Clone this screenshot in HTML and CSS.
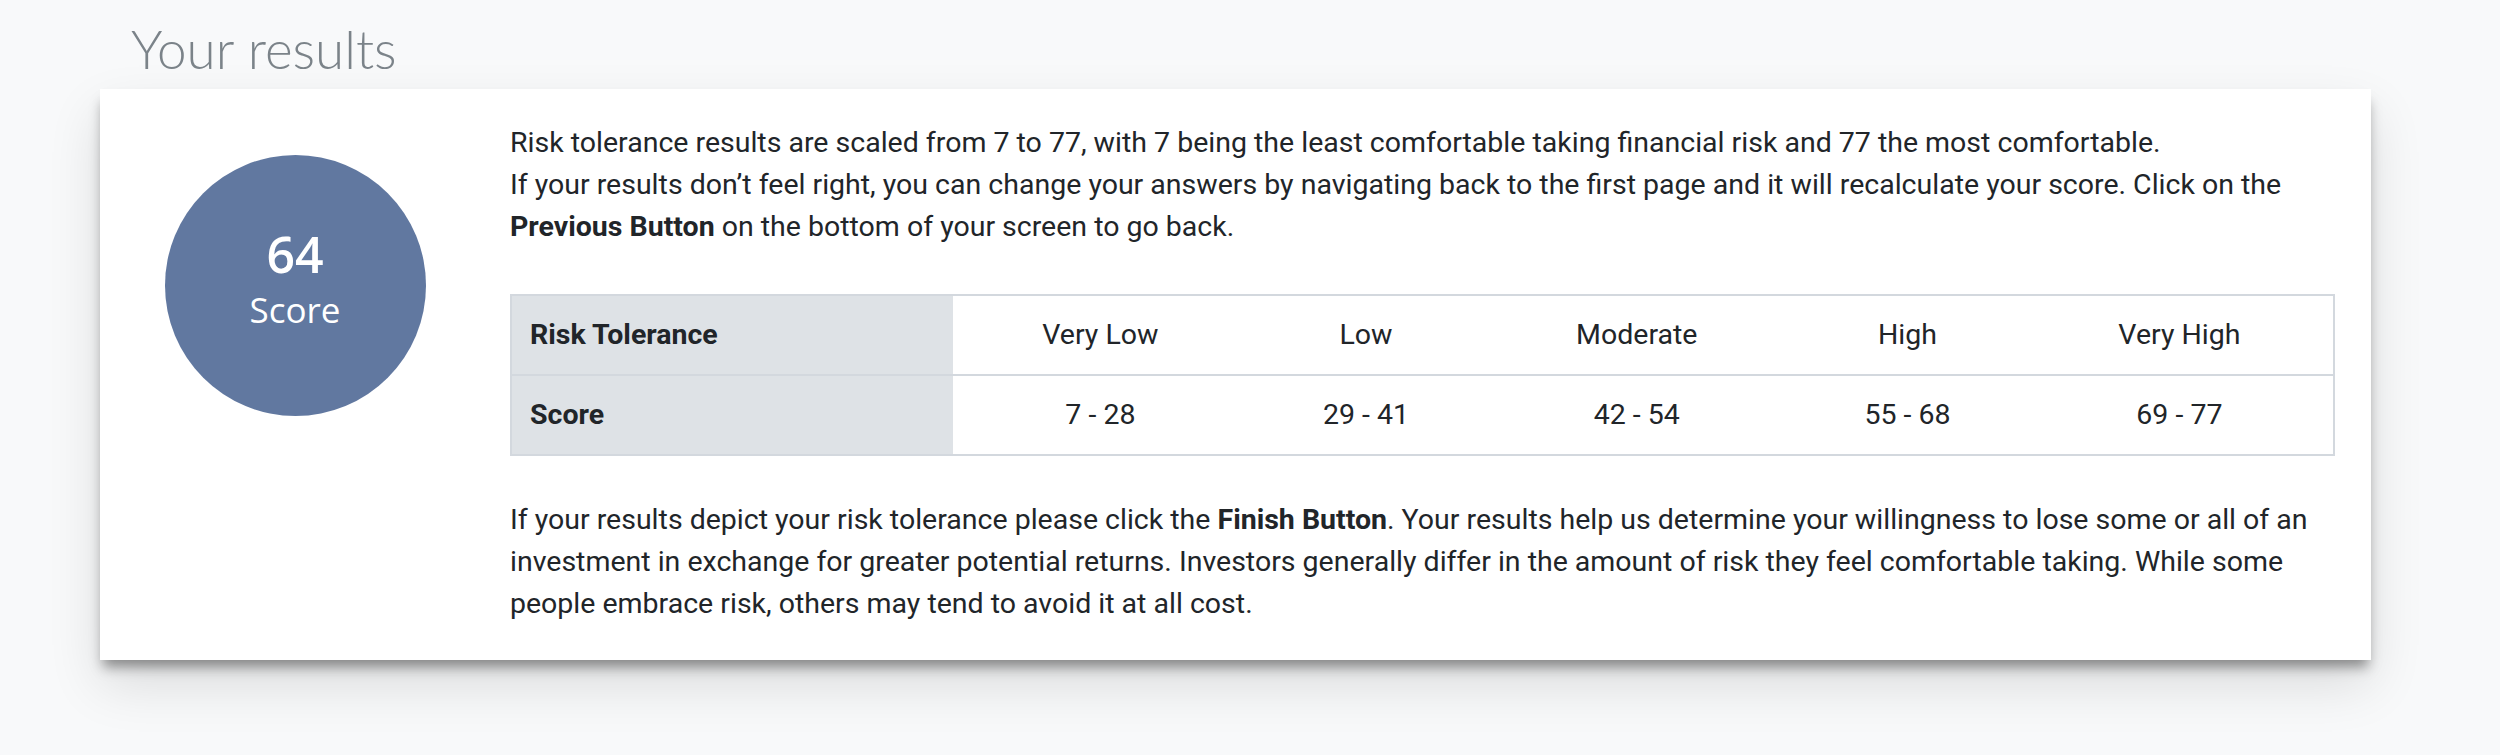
FILE: index.html
```html
<!DOCTYPE html>
<html>
<head>
<meta charset="utf-8">
<link rel="stylesheet" href="styles.css">
</head>
<body>
<div class="page">
  <h1 class="title">Your results</h1>
  <div class="card">
    <div class="score-col">
      <div class="circle">
        <div class="num">64</div>
        <div class="lbl">Score</div>
      </div>
    </div>
    <div class="content">
      <p class="para">Risk tolerance results are scaled from 7 to 77, with 7 being the least comfortable taking financial risk and 77 the most comfortable.<br>If your results don’t feel right, you can change your answers by navigating back to the first page and it will recalculate your score. Click on the <b>Previous Button</b> on the bottom of your screen to go back.</p>
      <table class="tbl">
        <tr>
          <th>Risk Tolerance</th>
          <td>Very Low</td><td>Low</td><td>Moderate</td><td>High</td><td>Very High</td>
        </tr>
        <tr>
          <th>Score</th>
          <td>7 - 28</td><td>29 - 41</td><td>42 - 54</td><td>55 - 68</td><td>69 - 77</td>
        </tr>
      </table>
      <p class="para last">If your results depict your risk tolerance please click the <b>Finish Button</b>. Your results help us determine your willingness to lose some or all of an investment in exchange for greater potential returns. Investors generally differ in the amount of risk they feel comfortable taking. While some people embrace risk, others may tend to avoid it at all cost.</p>
    </div>
  </div>
</div>
</body>
</html>
```
FILE: styles.css
```css
html, body {
  margin: 0;
  padding: 0;
  background: #f8f9fa;
}
.page {
  width: 2500px;
  height: 755px;
  overflow: hidden;
}
.title {
  margin: 0;
  padding: 19px 0 0 131px;
  height: 89px;
  box-sizing: border-box;
  font-family: Lato, "Liberation Sans", sans-serif;
  font-weight: 300;
  font-size: 53px;
  line-height: 60px;
  color: #7b8389;
}
.card {
  margin-left: 100px;
  width: 2271px;
  height: 571px;
  box-sizing: border-box;
  background: #fff;
  display: flex;
  padding: 33px 36px 0 0;
  box-shadow: 0 10px 12px -3px rgba(0,0,0,0.4), 0 24px 50px rgba(0,0,0,0.12);
}
.score-col {
  width: 390px;
  flex: none;
  display: flex;
  justify-content: center;
  align-items: flex-start;
  padding-top: 33px;
}
.circle {
  width: 261px;
  height: 261px;
  border-radius: 50%;
  background: #6178a0;
  color: #fff;
  font-family: "Open Sans", sans-serif;
  display: flex;
  flex-direction: column;
  align-items: center;
  justify-content: center;
}
.num {
  font-size: 50px;
  font-weight: 600;
  line-height: 62px;
  margin-top: -14px;
}
.lbl {
  font-size: 35px;
  line-height: 50px;
}
.content {
  flex: 1;
  margin-left: 20px;
  font-family: Roboto, "Liberation Sans", sans-serif;
  font-size: 28.5px;
  line-height: 42px;
  color: #212529;
}
.para {
  margin: 0;
}
.para b {
  font-weight: 700;
}
.tbl {
  margin: 46px 0 43px;
  width: 100%;
  border-collapse: collapse;
  border: 2px solid #d3d8de;
}
.tbl th, .tbl td {
  height: 78px;
  border-bottom: 2px solid #d3d8de;
  padding: 0 18px;
  vertical-align: middle;
  font-size: 28.5px;
}
.tbl th {
  width: 405px;
  background: #dee2e6;
  text-align: left;
  font-weight: 700;
}
.tbl td {
  text-align: center;
  font-weight: 400;
}
```
